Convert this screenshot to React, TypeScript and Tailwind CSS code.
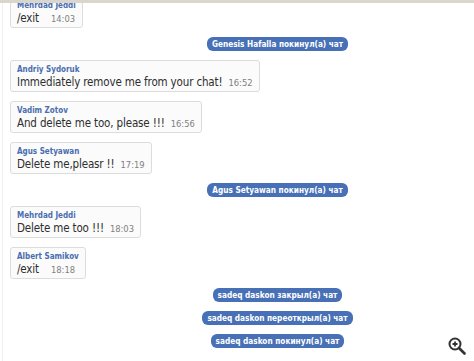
import React from 'react';

type Msg = { kind: 'msg'; name: string; text: string; time: string } | { kind: 'sys'; text: string };

const items: Msg[] = [
  { kind: 'msg', name: 'Mehrdad Jeddi', text: '/exit', time: '14:03' },
  { kind: 'sys', text: 'Genesis Hafalla покинул(а) чат' },
  { kind: 'msg', name: 'Andriy Sydoruk', text: 'Immediately remove me from your chat!', time: '16:52' },
  { kind: 'msg', name: 'Vadim Zotov', text: 'And delete me too, please !!!', time: '16:56' },
  { kind: 'msg', name: 'Agus Setyawan', text: 'Delete me,pleasr !!', time: '17:19' },
  { kind: 'sys', text: 'Agus Setyawan покинул(а) чат' },
  { kind: 'msg', name: 'Mehrdad Jeddi', text: 'Delete me too !!!', time: '18:03' },
  { kind: 'msg', name: 'Albert Samikov', text: '/exit', time: '18:18' },
  { kind: 'sys', text: 'sadeq daskon закрыл(а) чат' },
  { kind: 'sys', text: 'sadeq daskon переоткрыл(а) чат' },
  { kind: 'sys', text: 'sadeq daskon покинул(а) чат' },
];

const ZoomIcon = () => (
  <svg width="20" height="20" viewBox="0 0 20 20" fill="none">
    <circle cx="8" cy="8" r="5.5" stroke="#333" strokeWidth="2" />
    <path d="M8 5.5v5M5.5 8h5" stroke="#333" strokeWidth="1.8" />
    <path d="M12 12l5.5 5.5" stroke="#333" strokeWidth="2.6" strokeLinecap="round" />
  </svg>
);

export default function App() {
  return (
    <div
      className="relative h-[361px] w-[474px] overflow-hidden bg-white"
      style={{ fontFamily: '"DejaVu Sans Condensed", Tahoma, "DejaVu Sans", sans-serif' }}
    >
      <div className="absolute left-0 right-0 top-0 z-10 h-[3px] bg-[#d9d6cd]" />
      <div className="ml-[2px] flex h-full flex-col gap-[9px] border-l border-[#efefef] pl-[7px]">
        {items.map((m, i) =>
          m.kind === 'msg' ? (
            <div
              key={i}
              className={`self-start rounded-[3px] border border-[#dcdcdc] bg-[#fbfbfb] px-[6px] pb-[1px] pt-[3px] ${i === 0 ? '-mt-[4px]' : ''}`}
            >
              <div className="text-[8px] font-bold leading-[11px] text-[#4a6db0]">{m.name}</div>
              <div className="flex items-baseline leading-[15px]">
                <span className={`text-[11.5px] tracking-[-0.15px] text-[#2e2e2e] ${m.text === '/exit' ? 'pr-[6px]' : ''}`}>
                  {m.text}
                </span>
                <span className="ml-[6px] text-[9.3px] text-[#808080]">{m.time}</span>
              </div>
            </div>
          ) : (
            <div key={i} className="flex justify-center pl-[71px]">
              <span className="rounded-[6px] bg-[#4770b6] px-[5px] text-[8.2px] font-bold leading-[14px] text-white">
                {m.text}
              </span>
            </div>
          )
        )}
      </div>
      <div className="absolute bottom-[5px] right-[7px]">
        <ZoomIcon />
      </div>
    </div>
  );
}
